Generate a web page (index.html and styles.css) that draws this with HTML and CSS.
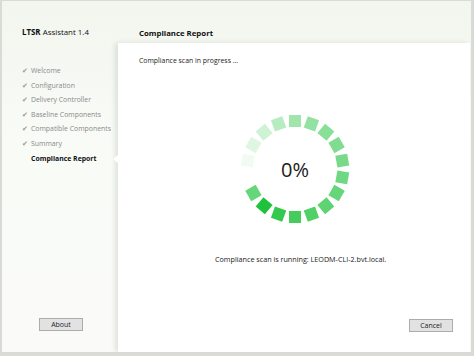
FILE: index.html
```html
<!DOCTYPE html>
<html lang="en">
  <head>
    <meta charset="UTF-8" />
    <meta name="viewport" content="width=device-width, initial-scale=1.0" />
    <title>LTSR Assistant</title>
    <link rel="stylesheet" href="styles.css">
  </head>
  <body>
    <div class="window">
      <aside class="sidebar">
        <h1 class="app-title"><b>LTSR</b> Assistant 1.4</h1>
        <ul class="steps">
          <li class="done"><span class="tick">&#10004;</span>Welcome</li>
          <li class="done"><span class="tick">&#10004;</span>Configuration</li>
          <li class="done"><span class="tick">&#10004;</span>Delivery Controller</li>
          <li class="done"><span class="tick">&#10004;</span>Baseline Components</li>
          <li class="done"><span class="tick">&#10004;</span>Compatible Components</li>
          <li class="done"><span class="tick">&#10004;</span>Summary</li>
          <li class="current"><span class="tick"></span>Compliance Report</li>
        </ul>
        <div class="side-foot">
          <button class="btn">About</button>
        </div>
      </aside>

      <main class="main">
        <h2 class="page-title">Compliance Report</h2>
        <section class="panel">
          <span class="pointer"></span>
          <p class="intro">Compliance scan in progress ...</p>
          <div class="spinner">
            <svg width="112" height="112" viewBox="-56 -56 112 112">
              <g fill="#1ec23b">
                <rect x="-6" y="-54" width="12" height="12" opacity="0.42" transform="rotate(0)" />
                <rect x="-6" y="-54" width="12" height="12" opacity="0.48" transform="rotate(20)" />
                <rect x="-6" y="-54" width="12" height="12" opacity="0.53" transform="rotate(40)" />
                <rect x="-6" y="-54" width="12" height="12" opacity="0.57" transform="rotate(60)" />
                <rect x="-6" y="-54" width="12" height="12" opacity="0.6" transform="rotate(80)" />
                <rect x="-6" y="-54" width="12" height="12" opacity="0.64" transform="rotate(100)" />
                <rect x="-6" y="-54" width="12" height="12" opacity="0.68" transform="rotate(120)" />
                <rect x="-6" y="-54" width="12" height="12" opacity="0.72" transform="rotate(140)" />
                <rect x="-6" y="-54" width="12" height="12" opacity="0.77" transform="rotate(160)" />
                <rect x="-6" y="-54" width="12" height="12" opacity="0.83" transform="rotate(180)" />
                <rect x="-6" y="-54" width="12" height="12" opacity="0.9" transform="rotate(200)" />
                <rect x="-6" y="-54" width="12" height="12" opacity="1" transform="rotate(220)" />
                <rect x="-6" y="-54" width="12" height="12" opacity="0.68" transform="rotate(240)" />
                <rect x="-6" y="-54" width="12" height="12" opacity="0.06" transform="rotate(280)" />
                <rect x="-6" y="-54" width="12" height="12" opacity="0.14" transform="rotate(300)" />
                <rect x="-6" y="-54" width="12" height="12" opacity="0.22" transform="rotate(320)" />
                <rect x="-6" y="-54" width="12" height="12" opacity="0.32" transform="rotate(340)" />
              </g>
            </svg>
            <span class="percent">0%</span>
          </div>
          <p class="status">Compliance scan is running: LEODM-CLI-2.bvt.local.</p>
          <div class="panel-foot">
            <button class="btn">Cancel</button>
          </div>
        </section>
      </main>
    </div>
  </body>
</html>
```

FILE: styles.css
```css
body {
  margin: 0;
  font-family: "Open Sans", "Noto Sans", sans-serif;
  color: #222;
}
.window {
  box-sizing: border-box;
  width: 474px;
  height: 356px;
  display: flex;
  border: 2px solid #d9dbd7;
  border-top-width: 1px;
  border-right-width: 3px;
  border-bottom-width: 4px;
  background: linear-gradient(#f2f6ee, #f9fbf7 40%, #fafbf8);
  overflow: hidden;
}

.sidebar {
  width: 116px;
  flex: none;
  display: flex;
  flex-direction: column;
  padding-left: 20px;
  box-sizing: border-box;
}
.app-title {
  margin: 24px 0 0;
  font-size: 7.9px;
  font-weight: normal;
  line-height: 14px;
  color: #111;
}
.app-title b {
  font-weight: 700;
}
.steps {
  list-style: none;
  margin: 25px 0 0;
  padding: 0;
  font-size: 6.9px;
  line-height: 14.6px;
  white-space: nowrap;
}
.steps li {
  display: flex;
  align-items: center;
  color: #8a8a8a;
}
.tick {
  width: 9px;
  font-size: 7px;
  color: #999;
}
.steps .current {
  color: #111;
  font-weight: 700;
}
.side-foot {
  margin-top: auto;
  padding: 0 0 20px 17px;
}

.btn {
  width: 44px;
  height: 13px;
  padding: 0;
  font-family: inherit;
  font-size: 7px;
  line-height: 11px;
  color: #222;
  background: #e2e2e2;
  border: 1px solid #acacac;
}

.main {
  flex: 1;
  display: flex;
  flex-direction: column;
}
.page-title {
  margin: 0;
  padding: 25px 0 0 21px;
  height: 17px;
  font-size: 7.8px;
  font-weight: 700;
  line-height: 14px;
  color: #111;
}
.panel {
  position: relative;
  flex: 1;
  display: flex;
  flex-direction: column;
  background: #fff;
  box-shadow: -3px 0 5px rgba(0, 0, 0, 0.1);
  margin-right: 1px;
}
.pointer {
  position: absolute;
  left: -5px;
  top: 112px;
  width: 0;
  height: 0;
  border-top: 4px solid transparent;
  border-bottom: 4px solid transparent;
  border-right: 5px solid #fff;
}
.intro {
  margin: 12px 0 0 21px;
  font-size: 6.9px;
  line-height: 12px;
}
.spinner {
  position: relative;
  align-self: flex-start;
  margin: 46px 0 0 121px;
  width: 112px;
  height: 112px;
}
.spinner svg {
  display: block;
}
.percent {
  position: absolute;
  inset: 0;
  display: flex;
  align-items: center;
  justify-content: center;
  font-size: 20px;
  font-weight: 400;
  color: #1a1a1a;
}
.status {
  margin: 28px 0 0 97px;
  font-size: 7.2px;
  line-height: 12px;
}
.panel-foot {
  margin-top: auto;
  display: flex;
  justify-content: flex-end;
  padding: 0 17px 20px 0;
}
```
